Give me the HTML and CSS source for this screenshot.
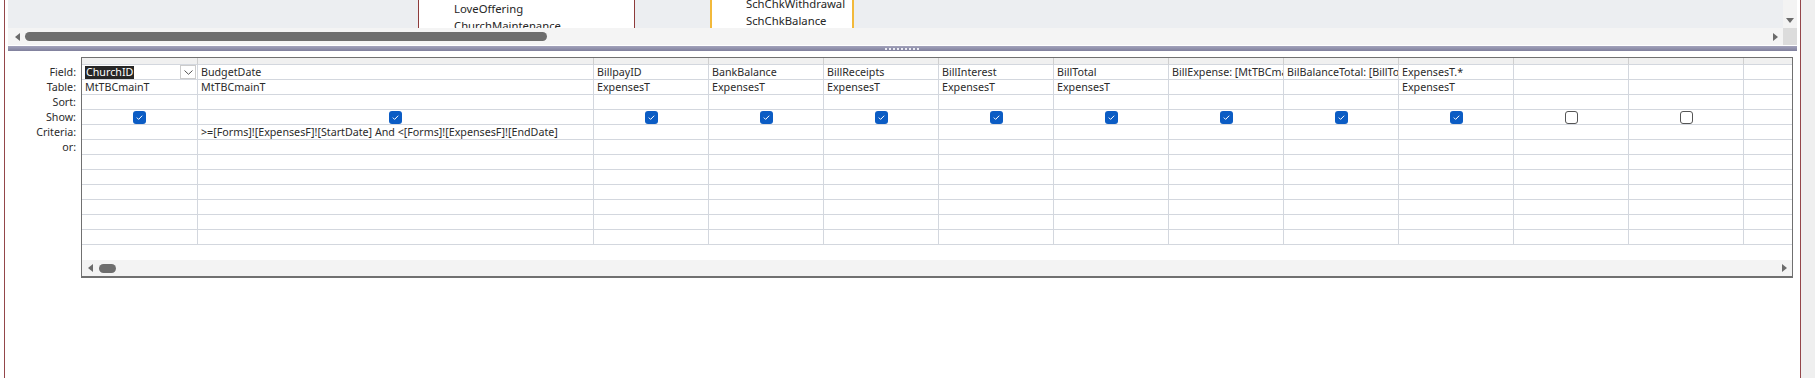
FILE: index.html
```html
<!DOCTYPE html>
<html>
<head>
<meta charset="utf-8">
<title>Query Design</title>
<link rel="stylesheet" href="styles.css">
</head>
<body>
<div class="window">
  <div class="upper">
    <div class="top">
      <div class="canvas">
        <div class="fieldlist fl-a">
          <div class="fl-item">LoveOffering</div>
          <div class="fl-item">ChurchMaintenance</div>
        </div>
        <div class="fieldlist fl-b">
          <div class="fl-item">SchChkWithdrawal</div>
          <div class="fl-item">SchChkBalance</div>
        </div>
      </div>
      <div class="vscroll"><svg width="8" height="5" viewBox="0 0 8 5"><path d="M0 0 L8 0 L4 5 Z" fill="#6b6b6b"/></svg></div>
    </div>
    <div class="hscroll">
      <div class="hs-track">
        <svg class="arr-l" width="5" height="8" viewBox="0 0 5 8"><path d="M5 0 L0 4 L5 8 Z" fill="#6b6b6b"/></svg>
        <div class="thumb"></div>
        <svg class="arr-r" width="5" height="8" viewBox="0 0 5 8"><path d="M0 0 L5 4 L0 8 Z" fill="#6b6b6b"/></svg>
      </div>
      <div class="corner"></div>
    </div>
  </div>
  <div class="splitter"><div class="grip"></div></div>
  <div class="design">
    <div class="labels">
      <div class="lb">Field:</div>
      <div class="lb">Table:</div>
      <div class="lb">Sort:</div>
      <div class="lb">Show:</div>
      <div class="lb">Criteria:</div>
      <div class="lb">or:</div>
    </div>
    <div class="grid">
      <div class="qbe">
        <div class="s"></div><div class="s"></div><div class="s"></div><div class="s"></div><div class="s"></div><div class="s"></div><div class="s"></div><div class="s"></div><div class="s"></div><div class="s"></div><div class="s"></div><div class="s"></div><div class="s"></div>

        <div class="c f1"><span class="hl">ChurchID</span><span class="dd"><svg width="9" height="5" viewBox="0 0 9 5"><path d="M0.5 0.5 L4.5 4.3 L8.5 0.5" fill="none" stroke="#555" stroke-width="1"/></svg></span></div>
        <div class="c">BudgetDate</div>
        <div class="c">BillpayID</div>
        <div class="c">BankBalance</div>
        <div class="c">BillReceipts</div>
        <div class="c">BillInterest</div>
        <div class="c">BillTotal</div>
        <div class="c">BillExpense: [MtTBCmainT]</div>
        <div class="c">BilBalanceTotal: [BillTotal]</div>
        <div class="c">ExpensesT.*</div>
        <div class="c"></div><div class="c"></div><div class="c"></div>

        <div class="c">MtTBCmainT</div>
        <div class="c">MtTBCmainT</div>
        <div class="c">ExpensesT</div>
        <div class="c">ExpensesT</div>
        <div class="c">ExpensesT</div>
        <div class="c">ExpensesT</div>
        <div class="c">ExpensesT</div>
        <div class="c"></div>
        <div class="c"></div>
        <div class="c">ExpensesT</div>
        <div class="c"></div><div class="c"></div><div class="c"></div>

        <div class="c"></div><div class="c"></div><div class="c"></div><div class="c"></div><div class="c"></div><div class="c"></div><div class="c"></div><div class="c"></div><div class="c"></div><div class="c"></div><div class="c"></div><div class="c"></div><div class="c"></div>

        <div class="c ck"><span class="cb on"><svg width="13" height="13" viewBox="0 0 13 13"><path d="M3.8 6.6 L5.6 8.4 L9.2 4.7" fill="none" stroke="#fff" stroke-width="1"/></svg></span></div>
        <div class="c ck"><span class="cb on"><svg width="13" height="13" viewBox="0 0 13 13"><path d="M3.8 6.6 L5.6 8.4 L9.2 4.7" fill="none" stroke="#fff" stroke-width="1"/></svg></span></div>
        <div class="c ck"><span class="cb on"><svg width="13" height="13" viewBox="0 0 13 13"><path d="M3.8 6.6 L5.6 8.4 L9.2 4.7" fill="none" stroke="#fff" stroke-width="1"/></svg></span></div>
        <div class="c ck"><span class="cb on"><svg width="13" height="13" viewBox="0 0 13 13"><path d="M3.8 6.6 L5.6 8.4 L9.2 4.7" fill="none" stroke="#fff" stroke-width="1"/></svg></span></div>
        <div class="c ck"><span class="cb on"><svg width="13" height="13" viewBox="0 0 13 13"><path d="M3.8 6.6 L5.6 8.4 L9.2 4.7" fill="none" stroke="#fff" stroke-width="1"/></svg></span></div>
        <div class="c ck"><span class="cb on"><svg width="13" height="13" viewBox="0 0 13 13"><path d="M3.8 6.6 L5.6 8.4 L9.2 4.7" fill="none" stroke="#fff" stroke-width="1"/></svg></span></div>
        <div class="c ck"><span class="cb on"><svg width="13" height="13" viewBox="0 0 13 13"><path d="M3.8 6.6 L5.6 8.4 L9.2 4.7" fill="none" stroke="#fff" stroke-width="1"/></svg></span></div>
        <div class="c ck"><span class="cb on"><svg width="13" height="13" viewBox="0 0 13 13"><path d="M3.8 6.6 L5.6 8.4 L9.2 4.7" fill="none" stroke="#fff" stroke-width="1"/></svg></span></div>
        <div class="c ck"><span class="cb on"><svg width="13" height="13" viewBox="0 0 13 13"><path d="M3.8 6.6 L5.6 8.4 L9.2 4.7" fill="none" stroke="#fff" stroke-width="1"/></svg></span></div>
        <div class="c ck"><span class="cb on"><svg width="13" height="13" viewBox="0 0 13 13"><path d="M3.8 6.6 L5.6 8.4 L9.2 4.7" fill="none" stroke="#fff" stroke-width="1"/></svg></span></div>
        <div class="c ck"><span class="cb off"></span></div>
        <div class="c ck"><span class="cb off"></span></div>
        <div class="c"></div>

        <div class="c"></div>
        <div class="c">&gt;=[Forms]![ExpensesF]![StartDate] And &lt;[Forms]![ExpensesF]![EndDate]</div>
        <div class="c"></div><div class="c"></div><div class="c"></div><div class="c"></div><div class="c"></div><div class="c"></div><div class="c"></div><div class="c"></div><div class="c"></div><div class="c"></div><div class="c"></div>

        <div class="c"></div><div class="c"></div><div class="c"></div><div class="c"></div><div class="c"></div><div class="c"></div><div class="c"></div><div class="c"></div><div class="c"></div><div class="c"></div><div class="c"></div><div class="c"></div><div class="c"></div>
        <div class="c"></div><div class="c"></div><div class="c"></div><div class="c"></div><div class="c"></div><div class="c"></div><div class="c"></div><div class="c"></div><div class="c"></div><div class="c"></div><div class="c"></div><div class="c"></div><div class="c"></div>
        <div class="c"></div><div class="c"></div><div class="c"></div><div class="c"></div><div class="c"></div><div class="c"></div><div class="c"></div><div class="c"></div><div class="c"></div><div class="c"></div><div class="c"></div><div class="c"></div><div class="c"></div>
        <div class="c"></div><div class="c"></div><div class="c"></div><div class="c"></div><div class="c"></div><div class="c"></div><div class="c"></div><div class="c"></div><div class="c"></div><div class="c"></div><div class="c"></div><div class="c"></div><div class="c"></div>
        <div class="c"></div><div class="c"></div><div class="c"></div><div class="c"></div><div class="c"></div><div class="c"></div><div class="c"></div><div class="c"></div><div class="c"></div><div class="c"></div><div class="c"></div><div class="c"></div><div class="c"></div>
        <div class="c"></div><div class="c"></div><div class="c"></div><div class="c"></div><div class="c"></div><div class="c"></div><div class="c"></div><div class="c"></div><div class="c"></div><div class="c"></div><div class="c"></div><div class="c"></div><div class="c"></div>
        <div class="c"></div><div class="c"></div><div class="c"></div><div class="c"></div><div class="c"></div><div class="c"></div><div class="c"></div><div class="c"></div><div class="c"></div><div class="c"></div><div class="c"></div><div class="c"></div><div class="c"></div>
      </div>
      <div class="gscroll">
        <svg class="g-arr-l" width="5" height="8" viewBox="0 0 5 8"><path d="M5 0 L0 4 L5 8 Z" fill="#6b6b6b"/></svg>
        <div class="g-thumb"></div>
        <svg class="g-arr-r" width="5" height="8" viewBox="0 0 5 8"><path d="M0 0 L5 4 L0 8 Z" fill="#6b6b6b"/></svg>
      </div>
    </div>
  </div>
</div>
<div class="side"></div>
</body>
</html>
```

FILE: styles.css
```css
* { box-sizing: border-box; }
html, body { margin: 0; padding: 0; }
body {
  width: 1815px;
  height: 378px;
  overflow: hidden;
  background: #ffffff;
  display: flex;
  font-family: "Noto Sans", "Open Sans", sans-serif;
  color: #2b2b2b;
}
.window {
  margin-left: 4px;
  width: 1797px;
  height: 378px;
  border-left: 1px solid #94464a;
  border-right: 1px solid #94464a;
  background: #ffffff;
}
.side { flex: 1; background: #efefef; }

/* upper pane */
.upper { margin: 0 3px; }
.top { display: flex; height: 28px; }
.canvas {
  flex: 1;
  position: relative;
  overflow: hidden;
  background: #eceef1;
}
.fieldlist {
  position: absolute;
  height: 90px;
  background: #ffffff;
  font-size: 11.3px;
  line-height: 17px;
  color: #262626;
  white-space: nowrap;
}
.fl-a {
  left: 410px;
  top: 0;
  width: 217px;
  border-left: 1px solid #8e3b3b;
  border-right: 1px solid #8e3b3b;
  padding-left: 35px;
}
.fl-b {
  left: 702px;
  top: -5px;
  width: 144px;
  border-left: 2px solid #f2b93b;
  border-right: 2px solid #f2b93b;
  padding-left: 34px;
}
.vscroll {
  width: 14px;
  background: #f3f3f3;
  display: flex;
  align-items: flex-end;
  justify-content: center;
  padding-bottom: 5px;
}
.hscroll { display: flex; height: 17px; }
.hs-track {
  flex: 1;
  display: flex;
  align-items: center;
  background: #f4f4f4;
  padding-left: 7px;
  padding-right: 5px;
}
.thumb {
  margin-left: 5px;
  width: 522px;
  height: 9px;
  border-radius: 5px;
  background: #6e6e6e;
}
.arr-r { margin-left: auto; }
.corner { width: 14px; background: #dcdcdc; }

.splitter {
  margin: 1px 3px 0;
  height: 5px;
  background: linear-gradient(#a3a3bb, #7f7f9c);
  display: flex;
  justify-content: center;
  align-items: center;
}
.grip {
  width: 36px;
  height: 2px;
  background: repeating-linear-gradient(90deg, #ececf4 0 2px, transparent 2px 4px);
}

/* design grid */
.design { display: flex; margin-top: 6px; }
.labels {
  width: 76px;
  padding-top: 8px;
  padding-right: 5px;
  text-align: right;
  font-size: 10.7px;
}
.lb { height: 15px; line-height: 14px; }
.grid {
  width: 1712px;
  border: 1px solid #707070;
  border-bottom-width: 2px;
}
.qbe {
  display: grid;
  grid-template-columns: 116px 396px repeat(10, 115px) 48px;
  grid-template-rows: 7px repeat(13, 15px);
}
.s {
  background: #f0f0f0;
  border-right: 1px solid #cfcfcf;
  border-bottom: 1px solid #d3d7de;
}
.c {
  border-right: 1px solid #d3d7de;
  border-bottom: 1px solid #d3d7de;
  padding-left: 3px;
  font-size: 10.7px;
  line-height: 14px;
  white-space: nowrap;
  overflow: hidden;
}
.qbe > :nth-child(13n) { border-right: none; }
.f1 { display: flex; align-items: center; padding-right: 1px; }
.hl {
  background: #262626;
  color: #ffffff;
  line-height: 13px;
  padding: 0 1px;
}
.dd {
  margin-left: auto;
  width: 16px;
  height: 14px;
  border: 1px solid #cccccc;
  background: #ffffff;
  display: flex;
  align-items: center;
  justify-content: center;
}
.ck {
  display: flex;
  align-items: center;
  justify-content: center;
  padding-left: 0;
}
.cb {
  display: block;
  width: 13px;
  height: 13px;
  border-radius: 3px;
}
.cb svg { display: block; }
.cb.on { background: #0b5cc4; }
.cb.off { background: #ffffff; border: 1px solid #555555; }
.gscroll {
  height: 16px;
  background: #f3f3f3;
  display: flex;
  align-items: center;
  padding-left: 6px;
  padding-right: 5px;
}
.g-thumb {
  margin-left: 6px;
  width: 17px;
  height: 9px;
  border-radius: 5px;
  background: #6e6e6e;
}
.g-arr-r { margin-left: auto; }
```
